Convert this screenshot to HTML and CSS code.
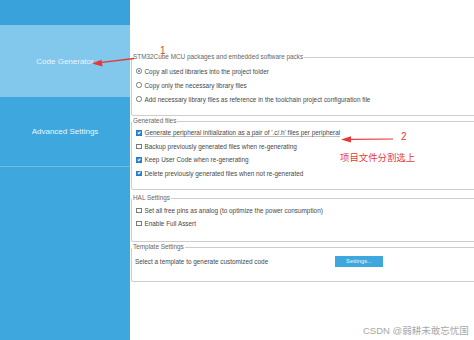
FILE: index.html
```html
<!DOCTYPE html>
<html lang="en">
<head>
  <meta charset="UTF-8" />
  <meta name="viewport" content="width=device-width, initial-scale=1.0"/>
  <title>Code Generator - Project Manager</title>
  <link rel="stylesheet" href="styles.css">
</head>
<body>
  <div class="app">
    <nav class="sidebar">
      <div class="side-top"></div>
      <div class="side-item active">Code Generator</div>
      <div class="side-item">Advanced Settings</div>
    </nav>

    <main class="panel">
      <fieldset class="group g-packs">
        <legend>STM32Cube MCU packages and embedded software packs</legend>
        <div class="opt"><span class="radio on"></span>Copy all used libraries into the project folder</div>
        <div class="opt"><span class="radio"></span>Copy only the necessary library files</div>
        <div class="opt"><span class="radio"></span>Add necessary library files as reference in the toolchain project configuration file</div>
      </fieldset>

      <fieldset class="group g-files">
        <legend>Generated files</legend>
        <div class="opt"><span class="check on"></span><span class="focused">Generate peripheral initialization as a pair of '.c/.h' files per peripheral</span></div>
        <div class="opt"><span class="check"></span>Backup previously generated files when re-generating</div>
        <div class="opt"><span class="check on"></span>Keep User Code when re-generating</div>
        <div class="opt"><span class="check on"></span>Delete previously generated files when not re-generated</div>
      </fieldset>

      <fieldset class="group g-hal">
        <legend>HAL Settings</legend>
        <div class="opt"><span class="check"></span>Set all free pins as analog (to optimize the power consumption)</div>
        <div class="opt"><span class="check"></span>Enable Full Assert</div>
      </fieldset>

      <fieldset class="group g-template">
        <legend>Template Settings</legend>
        <div class="opt template-row">
          <span class="template-label">Select a template to generate customized code</span>
          <button class="settings-btn">Settings...</button>
        </div>
      </fieldset>
    </main>

    <!-- annotations drawn over the screenshot -->
    <svg class="marks" width="474" height="340" viewBox="0 0 474 340">
      <line x1="134" y1="58.5" x2="100" y2="62.6" stroke="#e53935" stroke-width="1.3"/>
      <polygon points="92,63.6 101.5,59.8 102.5,66.4" fill="#e53935"/>
      <line x1="393" y1="139" x2="350" y2="139.3" stroke="#e53935" stroke-width="1.2"/>
      <polygon points="341,139.5 351,136.3 351,142.6" fill="#e53935"/>
    </svg>
    <div class="note note-1">1</div>
    <div class="note note-2">2</div>
    <div class="note note-cn">项目文件分割选上</div>
    <div class="watermark">CSDN @弱耕未敢忘忧国</div>
  </div>
</body>
</html>
```

FILE: styles.css
```css
body {
  margin: 0;
  font-family: "Liberation Sans", Arial, sans-serif;
  background-color: white;
  overflow: hidden;
}

.app {
  position: relative;
  display: flex;
  width: 474px;
  height: 340px;
  overflow: hidden;
}

.sidebar {
  width: 130px;
  flex-shrink: 0;
  background-color: #3ea8de;
  display: flex;
  flex-direction: column;
}

.side-top {
  height: 25px;
  background-color: #3aa2da;
}

.side-item {
  display: flex;
  align-items: center;
  justify-content: center;
  height: 70px;
  color: #eaf6fc;
  font-size: 8px;
}

.side-item.active {
  height: 72px;
  background-color: #82c7ec;
}

.side-item + .side-item {
  height: 69px;
  border-bottom: 1px solid #6dbde6;
}

.panel {
  flex: 1;
  padding: 52px 0 0 1px;
  margin-right: -12px;
}

.group {
  margin: 0;
  padding: 0 0 9px 0;
  border: 1px solid #cdcdcd;
  border-radius: 2px;
  min-width: 0;
}

.group legend {
  font-size: 6.4px;
  line-height: 10px;
  color: #666;
  padding: 0 1px;
}

.opt {
  display: flex;
  align-items: center;
  height: 14px;
  padding-left: 4px;
  font-size: 6.4px;
  color: #484848;
  white-space: nowrap;
}

.g-packs { padding-top: 2px; }

.g-files .opt { height: 13.5px; }

.g-hal {
  margin-top: 3px;
  padding-top: 1px;
  padding-bottom: 11px;
}

.g-hal .opt { height: 13px; }

.g-template {
  padding-top: 2px;
  padding-bottom: 13px;
}

.radio, .check {
  display: inline-block;
  box-sizing: border-box;
  width: 5.5px;
  height: 5.5px;
  margin-right: 3px;
  border: 1px solid #7a7a7a;
  background: white;
  position: relative;
  flex-shrink: 0;
}

.radio {
  border-radius: 50%;
}

.radio.on::after {
  content: "";
  position: absolute;
  left: 0.8px;
  top: 0.8px;
  width: 2px;
  height: 2px;
  border-radius: 50%;
  background: #2b86d4;
}

.check.on {
  border-color: #2b79c9;
  background: #2b86d4;
}

.check.on::after {
  content: "";
  position: absolute;
  left: 0.9px;
  top: -0.2px;
  width: 1.2px;
  height: 2.4px;
  border-right: 1px solid white;
  border-bottom: 1px solid white;
  transform: rotate(40deg);
}

.focused {
  border-bottom: 1px solid #bdbdbd;
  line-height: 7px;
}

.template-row {
  padding-left: 3px;
}

.template-label {
  width: 200px;
}

.settings-btn {
  width: 48px;
  height: 11px;
  padding: 0;
  border: none;
  background-color: #3ea8de;
  color: #eaf6fc;
  font-family: "Liberation Sans", Arial, sans-serif;
  font-size: 5.8px;
}

.marks {
  position: absolute;
  left: 0;
  top: 0;
  pointer-events: none;
}

.note {
  position: absolute;
  color: #e53935;
  font-size: 10px;
  line-height: 10px;
}

.note-1 { left: 160px; top: 46px; }
.note-2 { left: 401px; top: 132px; }

.note-cn {
  left: 340px;
  top: 152px;
  font-size: 9.4px;
  font-family: "Noto Sans CJK SC", sans-serif;
}

.watermark {
  position: absolute;
  left: 363px;
  top: 325px;
  font-size: 9.5px;
  line-height: 12px;
  color: #a8a8a8;
  font-family: "Liberation Sans", "Noto Sans CJK SC", sans-serif;
  white-space: nowrap;
}
```
